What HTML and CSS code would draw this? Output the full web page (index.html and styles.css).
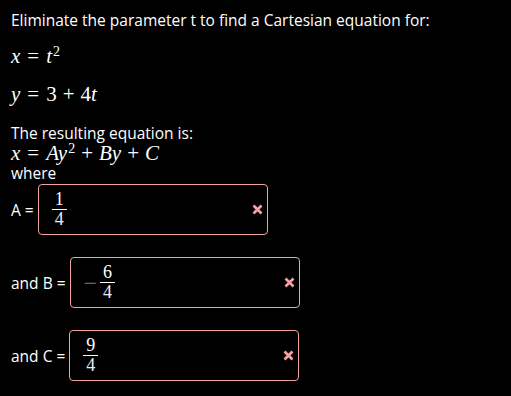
FILE: index.html
```html
<!DOCTYPE html>
<html lang="en">
<head>
    <meta charset="UTF-8">
    <title>Eliminate the parameter</title>
    <link rel="stylesheet" href="styles.css">
</head>
<body>
    <div class="question">
        <p class="intro">Eliminate the parameter t to find a Cartesian equation for:</p>
        <p class="math eq"><i>x</i><span class="rel">=</span><i>t</i><sup>2</sup></p>
        <p class="math eq"><i>y</i><span class="rel">=</span>3<span class="bin">+</span>4<i>t</i></p>

        <p class="text">The resulting equation is:</p>
        <p class="math result"><i>x</i><span class="rel">=</span><i>Ay</i><sup>2</sup><span class="bin">+</span><i>By</i><span class="bin">+</span><i>C</i></p>
        <p class="text">where</p>

        <div class="answer">
            <span class="label">A =</span>
            <div class="box">
                <span class="frac math"><span class="num">1</span><span class="den">4</span></span>
                <svg class="wrong" width="11" height="11" viewBox="0 0 11 11"><path d="M1.5 1.5 L9.5 9.5 M9.5 1.5 L1.5 9.5"/></svg>
            </div>
        </div>

        <div class="answer">
            <span class="label">and B =</span>
            <div class="box">
                <span class="minus math">&minus;</span>
                <span class="frac math"><span class="num">6</span><span class="den">4</span></span>
                <svg class="wrong" width="11" height="11" viewBox="0 0 11 11"><path d="M1.5 1.5 L9.5 9.5 M9.5 1.5 L1.5 9.5"/></svg>
            </div>
        </div>

        <div class="answer">
            <span class="label">and C =</span>
            <div class="box">
                <span class="frac math"><span class="num">9</span><span class="den">4</span></span>
                <svg class="wrong" width="11" height="11" viewBox="0 0 11 11"><path d="M1.5 1.5 L9.5 9.5 M9.5 1.5 L1.5 9.5"/></svg>
            </div>
        </div>
    </div>
</body>
</html>
```

FILE: styles.css
```css
/* Estilos generales */
body, html {
    margin: 0;
    padding: 0;
    background-color: #000;
    color: #fff;
}

.question {
    padding: 10px 11px;
    font-family: "Open Sans", sans-serif;
    font-size: 15.5px;
}

p {
    margin: 0;
}

.intro {
    line-height: 20px;
}

.math {
    font-family: "Liberation Serif", serif;
    font-size: 21px;
}

.math i {
    font-style: italic;
}

.math sup {
    font-size: 14px;
    vertical-align: 7px;
    line-height: 0;
    margin-left: 1px;
}

.rel {
    margin: 0 7px;
}

.bin {
    margin: 0 6px;
}

.eq {
    line-height: 24px;
    margin-top: 14px;
}

.text {
    line-height: 18px;
}

.eq + .text {
    margin-top: 18px;
}

.result {
    line-height: 22px;
}

/* Respuestas */
.answer {
    display: flex;
    align-items: center;
    gap: 4px;
    margin-bottom: 22px;
}

.result + .text + .answer {
    margin-top: 2px;
}

.box {
    display: flex;
    align-items: center;
    width: 230px;
    height: 51px;
    border: 1px solid #f4a3a3;
    border-radius: 4px;
    padding: 0 4px 0 13px;
    box-sizing: border-box;
}

.box .wrong {
    margin-left: auto;
    stroke: #f4a3a3;
    stroke-width: 2.6;
    fill: none;
}

.minus {
    color: #777;
    margin-right: 3px;
    font-size: 24px;
    line-height: 1;
}

.frac {
    display: inline-flex;
    flex-direction: column;
    align-items: center;
    font-size: 18px;
    line-height: 17px;
}

.frac .num {
    border-bottom: 1px solid #fff;
    padding: 0 3px 1px;
}

.frac .den {
    color: #e8eef8;
    padding-top: 1px;
}
```
